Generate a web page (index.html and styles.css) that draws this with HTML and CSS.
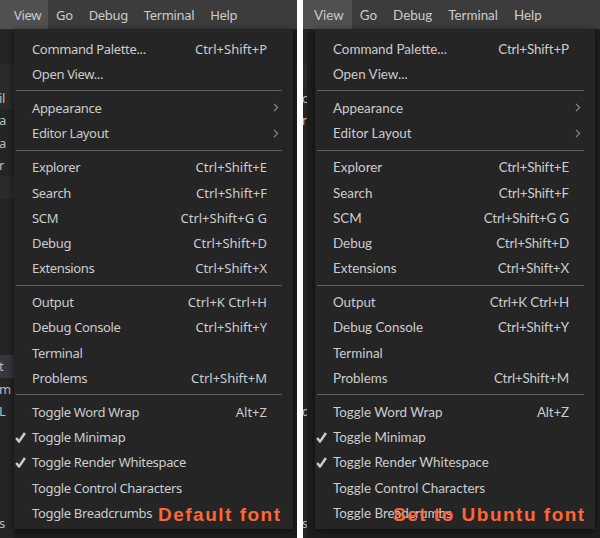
FILE: index.html
```html
<!DOCTYPE html>
<html lang="en">
<head>
<meta charset="utf-8">
<title>View menu fonts</title>
<link rel="stylesheet" href="styles.css">
</head>
<body>
<div class="screens">
  <section class="win win-default">
    <nav class="menubar">
      <span class="mb-item active">View</span>
      <span class="mb-item">Go</span>
      <span class="mb-item">Debug</span>
      <span class="mb-item">Terminal</span>
      <span class="mb-item">Help</span>
    </nav>
    <div class="workbench">
      <div class="sidebar">
        <div class="side-row"></div>
        <div class="side-row hl"></div>
        <div class="side-row hl">il</div>
        <div class="side-row">a</div>
        <div class="side-row">a</div>
        <div class="side-row">r</div>
        <div class="side-row hl"></div>
        <div class="side-row"></div>
        <div class="side-row"></div>
        <div class="side-row"></div>
        <div class="side-row"></div>
        <div class="side-row"></div>
        <div class="side-row"></div>
        <div class="side-row"></div>
        <div class="side-row sel">t</div>
        <div class="side-row">m</div>
        <div class="side-row">L</div>
        <div class="side-row"></div>
        <div class="side-row"></div>
        <div class="side-row"></div>
        <div class="side-row"></div>
        <div class="side-row">s</div>
        <div class="side-row">ck</div>
      </div>
      <div class="editor"></div>
    </div>
    <div class="menu">
      <div class="item"><span class="check"></span><span class="label">Command Palette...</span><span class="key">Ctrl+Shift+P</span><span class="tail"></span></div>
      <div class="item"><span class="check"></span><span class="label">Open View...</span><span class="tail"></span></div>
      <div class="sep"></div>
      <div class="item"><span class="check"></span><span class="label">Appearance</span><span class="tail"><svg class="chev" width="6" height="9" viewBox="0 0 6 9"><path d="M1 0.8 L4.6 4.5 L1 8.2" fill="none" stroke="#8a8a8a" stroke-width="1.2"/></svg></span></div>
      <div class="item"><span class="check"></span><span class="label">Editor Layout</span><span class="tail"><svg class="chev" width="6" height="9" viewBox="0 0 6 9"><path d="M1 0.8 L4.6 4.5 L1 8.2" fill="none" stroke="#8a8a8a" stroke-width="1.2"/></svg></span></div>
      <div class="sep"></div>
      <div class="item"><span class="check"></span><span class="label">Explorer</span><span class="key">Ctrl+Shift+E</span><span class="tail"></span></div>
      <div class="item"><span class="check"></span><span class="label">Search</span><span class="key">Ctrl+Shift+F</span><span class="tail"></span></div>
      <div class="item"><span class="check"></span><span class="label">SCM</span><span class="key">Ctrl+Shift+G G</span><span class="tail"></span></div>
      <div class="item"><span class="check"></span><span class="label">Debug</span><span class="key">Ctrl+Shift+D</span><span class="tail"></span></div>
      <div class="item"><span class="check"></span><span class="label">Extensions</span><span class="key">Ctrl+Shift+X</span><span class="tail"></span></div>
      <div class="sep"></div>
      <div class="item"><span class="check"></span><span class="label">Output</span><span class="key">Ctrl+K Ctrl+H</span><span class="tail"></span></div>
      <div class="item"><span class="check"></span><span class="label">Debug Console</span><span class="key">Ctrl+Shift+Y</span><span class="tail"></span></div>
      <div class="item"><span class="check"></span><span class="label">Terminal</span><span class="tail"></span></div>
      <div class="item"><span class="check"></span><span class="label">Problems</span><span class="key">Ctrl+Shift+M</span><span class="tail"></span></div>
      <div class="sep"></div>
      <div class="item"><span class="check"></span><span class="label">Toggle Word Wrap</span><span class="key">Alt+Z</span><span class="tail"></span></div>
      <div class="item"><span class="check"><svg width="11" height="11" viewBox="0 0 11 11"><path d="M1.2 6 L4 9.6 L9.9 1" fill="none" stroke="#cccccc" stroke-width="2.5" stroke-linejoin="round"/></svg></span><span class="label">Toggle Minimap</span><span class="tail"></span></div>
      <div class="item"><span class="check"><svg width="11" height="11" viewBox="0 0 11 11"><path d="M1.2 6 L4 9.6 L9.9 1" fill="none" stroke="#cccccc" stroke-width="2.5" stroke-linejoin="round"/></svg></span><span class="label">Toggle Render Whitespace</span><span class="tail"></span></div>
      <div class="item"><span class="check"></span><span class="label">Toggle Control Characters</span><span class="tail"></span></div>
      <div class="item"><span class="check"></span><span class="label">Toggle Breadcrumbs</span><span class="tail"></span></div>
    </div>
    <div class="caption">Default font</div>
  </section>

  <section class="win win-ubuntu">
    <nav class="menubar">
      <span class="mb-item active">View</span>
      <span class="mb-item">Go</span>
      <span class="mb-item">Debug</span>
      <span class="mb-item">Terminal</span>
      <span class="mb-item">Help</span>
    </nav>
    <div class="workbench">
      <div class="sidebar narrow">
        <div class="side-row"></div>
        <div class="side-row hl"></div>
        <div class="side-row">o</div>
        <div class="side-row">r</div>
        <div class="side-row"></div>
        <div class="side-row"></div>
        <div class="side-row"></div>
        <div class="side-row"></div>
        <div class="side-row"></div>
        <div class="side-row"></div>
        <div class="side-row"></div>
        <div class="side-row"></div>
        <div class="side-row"></div>
        <div class="side-row"></div>
        <div class="side-row"></div>
        <div class="side-row"></div>
        <div class="side-row">d</div>
        <div class="side-row"></div>
        <div class="side-row"></div>
        <div class="side-row"></div>
        <div class="side-row"></div>
        <div class="side-row">s</div>
        <div class="side-row">k</div>
      </div>
      <div class="editor"></div>
    </div>
    <div class="menu">
      <div class="item"><span class="check"></span><span class="label">Command Palette...</span><span class="key">Ctrl+Shift+P</span><span class="tail"></span></div>
      <div class="item"><span class="check"></span><span class="label">Open View...</span><span class="tail"></span></div>
      <div class="sep"></div>
      <div class="item"><span class="check"></span><span class="label">Appearance</span><span class="tail"><svg class="chev" width="6" height="9" viewBox="0 0 6 9"><path d="M1 0.8 L4.6 4.5 L1 8.2" fill="none" stroke="#8a8a8a" stroke-width="1.2"/></svg></span></div>
      <div class="item"><span class="check"></span><span class="label">Editor Layout</span><span class="tail"><svg class="chev" width="6" height="9" viewBox="0 0 6 9"><path d="M1 0.8 L4.6 4.5 L1 8.2" fill="none" stroke="#8a8a8a" stroke-width="1.2"/></svg></span></div>
      <div class="sep"></div>
      <div class="item"><span class="check"></span><span class="label">Explorer</span><span class="key">Ctrl+Shift+E</span><span class="tail"></span></div>
      <div class="item"><span class="check"></span><span class="label">Search</span><span class="key">Ctrl+Shift+F</span><span class="tail"></span></div>
      <div class="item"><span class="check"></span><span class="label">SCM</span><span class="key">Ctrl+Shift+G G</span><span class="tail"></span></div>
      <div class="item"><span class="check"></span><span class="label">Debug</span><span class="key">Ctrl+Shift+D</span><span class="tail"></span></div>
      <div class="item"><span class="check"></span><span class="label">Extensions</span><span class="key">Ctrl+Shift+X</span><span class="tail"></span></div>
      <div class="sep"></div>
      <div class="item"><span class="check"></span><span class="label">Output</span><span class="key">Ctrl+K Ctrl+H</span><span class="tail"></span></div>
      <div class="item"><span class="check"></span><span class="label">Debug Console</span><span class="key">Ctrl+Shift+Y</span><span class="tail"></span></div>
      <div class="item"><span class="check"></span><span class="label">Terminal</span><span class="tail"></span></div>
      <div class="item"><span class="check"></span><span class="label">Problems</span><span class="key">Ctrl+Shift+M</span><span class="tail"></span></div>
      <div class="sep"></div>
      <div class="item"><span class="check"></span><span class="label">Toggle Word Wrap</span><span class="key">Alt+Z</span><span class="tail"></span></div>
      <div class="item"><span class="check"><svg width="11" height="11" viewBox="0 0 11 11"><path d="M1.2 6 L4 9.6 L9.9 1" fill="none" stroke="#cccccc" stroke-width="2.5" stroke-linejoin="round"/></svg></span><span class="label">Toggle Minimap</span><span class="tail"></span></div>
      <div class="item"><span class="check"><svg width="11" height="11" viewBox="0 0 11 11"><path d="M1.2 6 L4 9.6 L9.9 1" fill="none" stroke="#cccccc" stroke-width="2.5" stroke-linejoin="round"/></svg></span><span class="label">Toggle Render Whitespace</span><span class="tail"></span></div>
      <div class="item"><span class="check"></span><span class="label">Toggle Control Characters</span><span class="tail"></span></div>
      <div class="item"><span class="check"></span><span class="label">Toggle Breadcrumbs</span><span class="tail"></span></div>
    </div>
    <div class="caption">Set to Ubuntu font</div>
  </section>
</div>
</body>
</html>
```
FILE: styles.css
```css
* { box-sizing: border-box; }

html, body {
  margin: 0;
  padding: 0;
  background: #ffffff;
}

body {
  width: 600px;
  height: 538px;
  overflow: hidden;
}

.screens {
  display: flex;
  gap: 6px;
  height: 538px;
}

.win {
  position: relative;
  width: 297px;
  height: 538px;
  flex: none;
  background: #1e1e1e;
  overflow: hidden;
  display: flex;
  flex-direction: column;
  font-size: 13px;
  color: #cccccc;
}

.win-default {
  font-family: "Noto Sans", "Open Sans", sans-serif;
  letter-spacing: -0.35px;
}

.win-default .key { letter-spacing: 0; }

.win-ubuntu {
  font-family: "Lato", "Noto Sans", sans-serif;
  font-size: 13.4px;
}

.win-ubuntu .key { letter-spacing: -0.15px; }

/* menubar */
.menubar {
  flex: none;
  height: 29px;
  background: #3c3c3c;
  display: flex;
  align-items: stretch;
}

.mb-item {
  display: flex;
  align-items: center;
  padding: 0 8px;
  color: #cccccc;
  white-space: nowrap;
}

.mb-item.active { background: #505050; }

.win-default .mb-item:first-child { padding-left: 14px; padding-right: 7px; }
.win-ubuntu .mb-item:first-child { padding-left: 11px; padding-right: 8px; }

/* workbench behind the menu */
.workbench {
  flex: 1;
  display: flex;
  min-height: 0;
}

.sidebar {
  width: 14px;
  flex: none;
  background: #252526;
  padding-top: 13px;
  overflow: hidden;
}

.sidebar.narrow { width: 4px; }

.side-row {
  height: 22.4px;
  line-height: 22.4px;
  font-size: 13px;
  color: #bbbbbb;
  white-space: nowrap;
  text-indent: -1px;
}

.side-row.hl { background: #2c2c2d; }
.side-row.sel { background: #37373d; }

.editor {
  flex: 1;
  background: #1e1e1e;
}

/* dropdown menu */
.menu {
  position: absolute;
  top: 29px;
  left: 14px;
  width: 279px;
  background: #252526;
  padding: 7px 0 4px;
  box-shadow: 0 2px 8px rgba(0, 0, 0, 0.6);
}

.win-ubuntu .menu {
  left: 12px;
  width: 280px;
}

.item {
  display: flex;
  align-items: center;
  height: 25.2px;
  white-space: nowrap;
  color: #cccccc;
}

.check {
  flex: none;
  width: 18px;
  padding-left: 1px;
  display: flex;
  align-items: center;
}

.label { flex: 1; }

.key { flex: none; }

.tail {
  flex: none;
  width: 26px;
  padding-left: 6px;
  display: flex;
  align-items: center;
}

.sep {
  height: 9px;
  display: flex;
  align-items: center;
  padding: 0 11px 0 2px;
}

.sep::before {
  content: "";
  flex: 1;
  height: 1px;
  background: #606060;
}

/* annotation */
.caption {
  position: absolute;
  top: 505px;
  left: 158px;
  font-family: "Liberation Sans", Arial, sans-serif;
  font-weight: bold;
  font-size: 19px;
  line-height: 19px;
  letter-spacing: 1.5px;
  color: #ff6633;
  white-space: nowrap;
}

.win-ubuntu .caption { left: 90px; }
```
